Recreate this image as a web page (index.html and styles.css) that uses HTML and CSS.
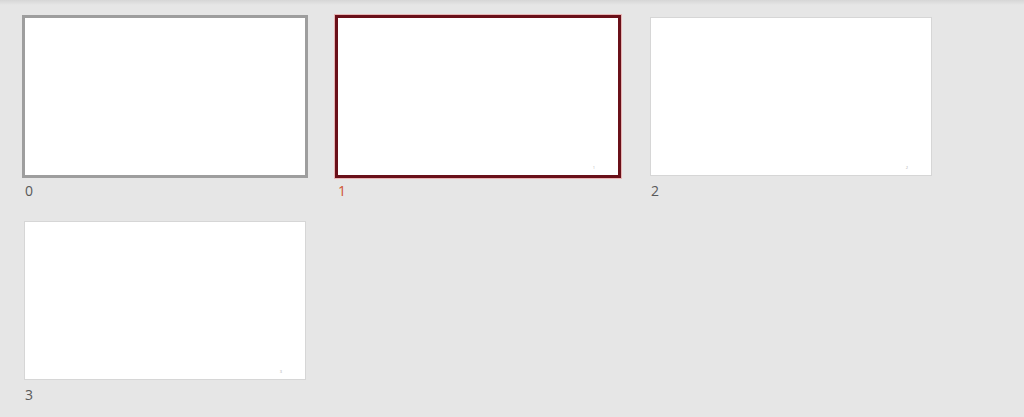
FILE: index.html
```html
<!DOCTYPE html>
<html>
<head>
<meta charset="utf-8">
<link rel="stylesheet" href="styles.css">
</head>
<body>
<div class="topshade"></div>
<div class="sorter">
  <div class="item">
    <div class="thumb selected-gray"></div>
    <div class="label">0</div>
  </div>
  <div class="item">
    <div class="thumb selected-red"><span class="pagenum">1</span></div>
    <div class="label label-active">1</div>
  </div>
  <div class="item">
    <div class="thumb"><span class="pagenum">2</span></div>
    <div class="label">2</div>
  </div>
  <div class="item">
    <div class="thumb"><span class="pagenum">3</span></div>
    <div class="label">3</div>
  </div>
</div>
</body>
</html>
```
FILE: styles.css
```css
html, body {
  margin: 0;
  padding: 0;
  background: #e6e6e6;
  width: 1024px;
  height: 417px;
  overflow: hidden;
  font-family: "Open Sans", "Noto Sans", "Liberation Sans", sans-serif;
}
.topshade {
  height: 5px;
  background: linear-gradient(#d6d6d6, #e6e6e6);
}
.sorter {
  display: grid;
  grid-template-columns: repeat(3, 282px);
  column-gap: 31px;
  row-gap: 0;
  grid-auto-rows: 204px;
  padding: 12px 0 0 24px;
}
.item {
  display: flex;
  flex-direction: column;
}
.thumb {
  position: relative;
  width: 282px;
  height: 159px;
  box-sizing: border-box;
  background: #ffffff;
  border: 1px solid #d6d6d6;
}
.selected-gray {
  border-color: #9e9e9e;
  box-shadow: 0 0 0 2px #9e9e9e;
}
.selected-red {
  border-color: #6a1019;
  box-shadow: 0 0 0 2px #6a1019, 0 0 0 3px #e8b6b6;
}
.pagenum {
  position: absolute;
  right: 23px;
  bottom: 5px;
  font-size: 4px;
  line-height: 4px;
  color: #b0b0b0;
}
.label {
  margin-top: 7px;
  font-size: 14px;
  font-weight: 400;
  line-height: 16px;
  color: #595959;
  padding-left: 1px;
}
.label-active {
  color: #cf5430;
}
```
